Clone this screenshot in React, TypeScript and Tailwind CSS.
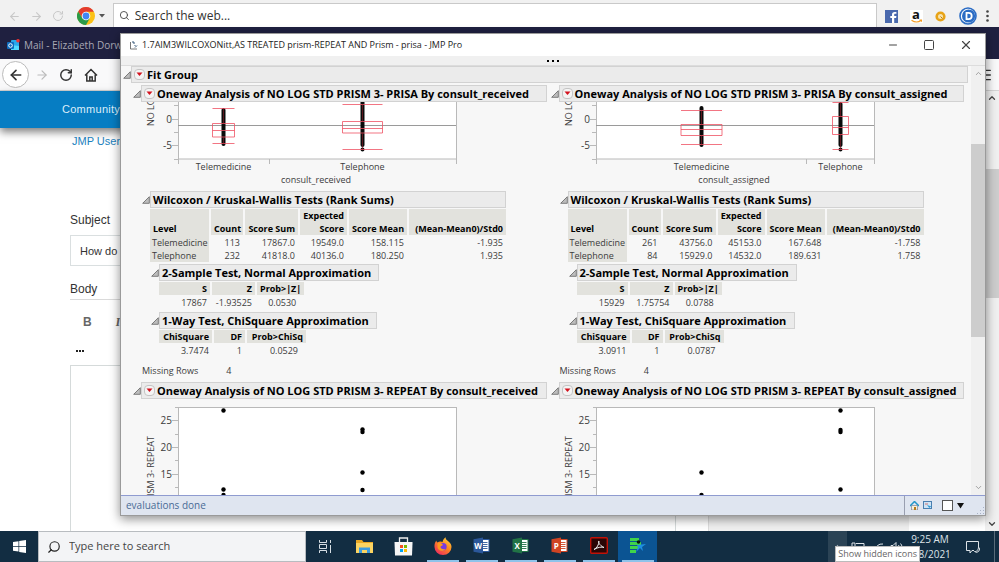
import { ArrowLeft, ArrowRight, ChevronDown, ChevronUp, Menu, Minus, RotateCw, Search, Square, X } from 'lucide-react'

type Box = { x: number; w: number; top: number; mid: number; bottom: number; hi: number; lo: number; from: number; to: number; dots: number[] }

type Group = {
  by: string
  split: number
  labelX: number
  boxes: Box[]
  levels: string[][]
  normal: string[]
  chi: string[]
  points: number[][]
}

const groups: Group[] = [
  {
    by: 'consult_received',
    split: 138.5,
    labelX: 185,
    boxes: [
      { x: 92.5, w: 22, top: 21.5, mid: 28.5, bottom: 35, hi: 6.5, lo: 41.5, from: 8, to: 42, dots: [] },
      { x: 231.5, w: 40, top: 19.5, mid: 26.5, bottom: 31, hi: 2.5, lo: 47.5, from: -4, to: 43, dots: [47.5] },
    ],
    levels: [
      ['Telemedicine', '113', '17867.0', '19549.0', '158.115', '-1.935'],
      ['Telephone', '232', '41818.0', '40136.0', '180.250', '1.935'],
    ],
    normal: ['17867', '-1.93525', '0.0530'],
    chi: ['3.7474', '1', '0.0529'],
    points: [[92.5, 10.5], [92.5, 89.5], [92.5, 95], [231.5, 29.5], [231.5, 32], [231.5, 72.5], [231.5, 90]],
  },
  {
    by: 'consult_assigned',
    split: 257.5,
    labelX: 185,
    boxes: [
      { x: 152.5, w: 41, top: 22.5, mid: 27.5, bottom: 33.5, hi: 8.5, lo: 42.5, from: 6, to: 43, dots: [] },
      { x: 291.5, w: 16, top: 14.5, mid: 25.5, bottom: 32.5, hi: 0.5, lo: 47.5, from: 2, to: 43, dots: [47.5] },
    ],
    levels: [
      ['Telemedicine', '261', '43756.0', '45153.0', '167.648', '-1.758'],
      ['Telephone', '84', '15929.0', '14532.0', '189.631', '1.758'],
    ],
    normal: ['15929', '1.75754', '0.0788'],
    chi: ['3.0911', '1', '0.0787'],
    points: [[152.5, 72.5], [152.5, 95], [291.5, 10.5], [291.5, 30], [291.5, 32], [291.5, 89.5]],
  },
]

function Disclosure() {
  return (
    <button aria-label="Toggle section" className="flex w-2 flex-none justify-end">
      <svg width="8" height="8" viewBox="0 0 8 8">
        <path d="M7.3 0.7v6.6H0.7z" fill="#bdbdbd" stroke="#6f6f6f" strokeWidth="0.9" />
      </svg>
    </button>
  )
}

function Heading({ title, menu, className = '' }: { title: string; menu?: boolean; className?: string }) {
  return (
    <div className="flex h-[17px] items-center">
      <Disclosure />
      <div className={`flex h-[17px] items-center gap-[2px] border border-[#d2d2d2] bg-[#ebebeb] pl-[2px] ${className}`}>
        {menu && (
          <button aria-label="Options" className="flex size-[11px] flex-none items-center justify-center rounded-sm border border-[#c4c4c4] bg-[#f4f4f4]">
            <svg width="7" height="5" viewBox="0 0 7 5">
              <path d="M0.5 0.5h6l-3 3.5z" fill="#d3121e" />
            </svg>
          </button>
        )}
        <h2 className="text-[11px] leading-[15px] font-bold whitespace-nowrap text-black">{title}</h2>
      </div>
    </div>
  )
}

/* lower part of the box plot, the rest is scrolled under the heading */
function BoxPlot({ g }: { g: Group }) {
  return (
    <svg width="418" height="88" viewBox="0 0 418 88" className="block flex-none text-[9px]" fill="#3c3c3c">
      <rect x="47.5" y="-10" width="278" height="67" fill="#fff" stroke="#b9b9b9" />
      <path d={`M43 3.5h4M41 17.5h6M43 30.5h4M41 43.5h6M43 57.5h4M47.5 57v5M${g.split} 57v5M325.5 57v5`} stroke="#b9b9b9" />
      <path d="M47 23.5h278" stroke="#9a9a9a" />
      {g.boxes.map(b => (
        <g key={b.x}>
          <path d={`M${b.x} ${b.from}V${b.to}`} stroke="#0a0a0a" strokeWidth="4" strokeLinecap="round" />
          {b.dots.map(d => (
            <circle key={d} cx={b.x} cy={d} r="2" fill="#0a0a0a" />
          ))}
          <path
            d={`M${b.x - b.w / 2} ${b.hi}h${b.w}M${b.x - b.w / 2} ${b.lo}h${b.w}M${b.x - b.w / 2} ${b.mid}h${b.w}M${b.x - b.w / 2} ${b.top}h${b.w}V${b.bottom}h${-b.w}z`}
            fill="none"
            stroke="#ef5364"
            strokeOpacity="0.8"
          />
          <path d={`M${b.x} ${b.hi}V${b.top}M${b.x} ${b.bottom}V${b.lo}`} stroke="#8f1c2a" strokeOpacity="0.6" />
        </g>
      ))}
      <text x="41" y="21" textAnchor="end" className="text-[10px]">0</text>
      <text x="41" y="47" textAnchor="end" className="text-[10px]">-5</text>
      <text transform="translate(23 24) rotate(-90)">NO LOG</text>
      <text x={g.boxes[0].x} y="68" textAnchor="middle">Telemedicine</text>
      <text x={g.boxes[1].x} y="68" textAnchor="middle">Telephone</text>
      <text x={g.labelX} y="81" textAnchor="middle">{g.by}</text>
    </svg>
  )
}

function DotPlot({ g }: { g: Group }) {
  return (
    <svg width="418" height="150" viewBox="0 0 418 150" className="mt-px block flex-none text-[10px]" fill="#3c3c3c">
      <rect x="47.5" y="7.5" width="278" height="150" fill="#fff" stroke="#b9b9b9" />
      <path d="M44 7.5h3M41 20.5h6M44 34.5h3M41 47.5h6M44 60.5h3M41 74.5h6M44 87.5h3" stroke="#b9b9b9" />
      {g.points.map(([x, y]) => (
        <circle key={`${x}-${y}`} cx={x} cy={y} r="2.2" fill="#000" />
      ))}
      <text x="41" y="24" textAnchor="end">25</text>
      <text x="41" y="51" textAnchor="end">20</text>
      <text x="41" y="78" textAnchor="end">15</text>
      <text transform="translate(23 36) rotate(-90)" textAnchor="end" className="text-[9px]">NO LOG STD PRISM 3- REPEAT</text>
    </svg>
  )
}

const th = 'border-r-2 border-[#f7f7f7] bg-[#e2e2dd] bg-clip-padding px-[3px] text-right align-bottom font-bold text-black last:border-r-0'
const td = 'border-r-2 border-transparent px-[3px] text-right last:border-r-0'

function RankSums({ rows }: { rows: string[][] }) {
  return (
    <table className="mt-px ml-2 w-[356px] table-fixed text-[9px] leading-[13px] text-[#3c3c3c]">
      <thead>
        <tr className="h-[26px]">
          <th className={`${th} w-[60px] text-left!`}>Level</th>
          <th className={`${th} w-[34px]`}>Count</th>
          <th className={`${th} w-[55px] whitespace-nowrap`}>Score Sum</th>
          <th className={`${th} w-[49px]`}>Expected Score</th>
          <th className={`${th} w-[60px] whitespace-nowrap`}>Score Mean</th>
          <th className={`${th} whitespace-nowrap`}>(Mean-Mean0)/Std0</th>
        </tr>
      </thead>
      <tbody>
        {rows.map(r => (
          <tr key={r[0]} className="first:*:pt-px">
            {r.map((c, i) => (
              <td key={i} className={i === 0 ? 'border-r-2 border-[#f7f7f7] bg-[#e2e2dd] bg-clip-padding pl-[2px]' : td}>
                {c}
              </td>
            ))}
          </tr>
        ))}
      </tbody>
    </table>
  )
}

function SmallTable({ head, row, widths }: { head: string[]; row: string[]; widths: string[] }) {
  return (
    <table className="mt-px ml-2 table-fixed text-[9px] leading-[13px] text-[#3c3c3c]">
      <thead>
        <tr>
          {head.map((h, i) => (
            <th key={h} className={`${th} ${widths[i]} whitespace-nowrap`}>{h}</th>
          ))}
        </tr>
      </thead>
      <tbody>
        <tr>
          {row.map((c, i) => (
            <td key={i} className={`${td} pt-px ${i === 2 ? 'pr-2!' : ''}`}>{c}</td>
          ))}
        </tr>
      </tbody>
    </table>
  )
}

function Analysis({ g }: { g: Group }) {
  return (
    <section className="flex flex-col">
      <div className="pr-[2px] pl-[2px]">
        <Heading menu title={`Oneway Analysis of NO LOG STD PRISM 3- PRISA By ${g.by}`} className="flex-1" />
      </div>
      <BoxPlot g={g} />
      <div className="mt-px pl-[11px]">
        <Heading title="Wilcoxon / Kruskal-Wallis Tests (Rank Sums)" className="w-[356px]" />
        <RankSums rows={g.levels} />
        <div className="mt-[2px] pl-[9px]">
          <Heading title="2-Sample Test, Normal Approximation" className="w-[220px]" />
          <SmallTable head={['S', 'Z', 'Prob>|Z|']} row={g.normal} widths={['w-[52px]', 'w-[45px]', 'w-[48px]']} />
          <div className="h-[3px]" />
          <Heading title="1-Way Test, ChiSquare Approximation" className="w-[218px]" />
          <SmallTable head={['ChiSquare', 'DF', 'Prob>ChiSq']} row={g.chi} widths={['w-[54px]', 'w-[33px]', 'w-[60px]']} />
        </div>
        <p className="mt-[6px] flex gap-7 text-[9px] leading-[15px] text-[#3c3c3c]">
          <span>Missing Rows</span>
          <span>4</span>
        </p>
      </div>
      <div className="mt-[4px] pr-[2px] pl-[2px]">
        <Heading menu title={`Oneway Analysis of NO LOG STD PRISM 3- REPEAT By ${g.by}`} className="flex-1" />
      </div>
      <DotPlot g={g} />
    </section>
  )
}

function ChromeLogo() {
  return (
    <svg width="18" height="18" viewBox="0 0 18 18">
      <circle cx="9" cy="9" r="9" fill="#fbc116" />
      <path d="M9 4.8h7.9A9 9 0 0 0 1.2 4.500l3.900 6.700z" fill="#e33b2e" />
      <path d="M1.200 4.500A9 9 0 0 0 9 18l3.800-6.800L9 13l-3.800-2z" fill="#2a9a48" />
      <circle cx="9" cy="9" r="4.300" fill="#fff" />
      <circle cx="9" cy="9" r="3.400" fill="#4285f4" />
    </svg>
  )
}

function LaunchBar() {
  return (
    <div className="flex h-[27px] flex-none items-end bg-[#f1f1f1]">
      <div className="flex h-[22px] w-[113px] items-center gap-[9px] pl-2 text-[#c8c8c8]">
        <ArrowLeft size={13} strokeWidth={2} />
        <ArrowRight size={13} strokeWidth={2} />
        <RotateCw size={12} strokeWidth={2} />
        <button aria-label="Browser" className="ml-1 flex items-center gap-1">
          <ChromeLogo />
          <svg width="6" height="4" viewBox="0 0 6 4">
            <path d="M0 0h6L3 3.5z" fill="#555" />
          </svg>
        </button>
      </div>
      <label className="flex h-6 flex-1 items-center gap-[5px] border border-b-0 border-[#c9c9c9] bg-white pl-[5px]">
        <Search size={11} className="text-[#444]" />
        <input aria-label="Search the web" placeholder="Search the web..." className="w-full font-['Open_Sans',sans-serif] text-[12px] outline-none placeholder:text-[#333]" />
      </label>
      <div className="flex h-[22px] w-[122px] items-center gap-3 pl-2">
        <svg width="13" height="13" viewBox="0 0 13 13">
          <rect width="13" height="13" fill="#4968ad" />
          <path d="M9.2 13V8h1.9l.3-2H9.2V4.8c0-.6.3-1 1-1h1.2V2H9.7C7.9 2 7 3 7 4.6V6H5.3v2H7v5z" fill="#fff" />
        </svg>
        <svg width="13" height="13" viewBox="0 0 13 13">
          <rect width="13" height="13" fill="#fff" />
          <text x="6" y="9" textAnchor="middle" fontSize="13" fontWeight="bold" fill="#111" className="font-['Open_Sans',sans-serif]">a</text>
          <path d="M1.500 10.300c3 2 7 2 9.500 0.200M9.500 10h2v1.800" fill="none" stroke="#f59b23" strokeWidth="1.100" />
        </svg>
        <svg width="11" height="11" viewBox="0 0 11 11">
          <circle cx="5.5" cy="5.5" r="3.8" fill="#f7e3ae" stroke="#e8a317" strokeWidth="2.6" />
          <path d="M5.5 5.5l2 2" stroke="#b97a12" />
        </svg>
        <svg width="18" height="18" viewBox="0 0 18 18" className="ml-px">
          <circle cx="9" cy="9" r="8" fill="#fff" stroke="#2b6cc4" strokeWidth="1.6" />
          <circle cx="9.6" cy="9" r="6.600" fill="#2b6cc4" />
          <path d="M7.5 5.800h2a3.200 3.200 0 0 1 0 6.400h-2z" fill="none" stroke="#fff" strokeWidth="1.8" />
        </svg>
        <svg width="3" height="12" viewBox="0 0 3 12" className="-ml-[3px]" fill="#444">
          <circle cx="1.5" cy="1.5" r="1.3" />
          <circle cx="1.5" cy="6" r="1.3" />
          <circle cx="1.5" cy="10.5" r="1.3" />
        </svg>
      </div>
    </div>
  )
}

function BrowserPage() {
  return (
    <div className="flex min-h-0 flex-1 flex-col bg-white">
      <div className="flex h-8 flex-none items-center gap-1 bg-[#1f2040] pt-1 pl-[7px] font-['Open_Sans',sans-serif] text-[10px] text-[#a9a9b5]">
        <svg width="13" height="12" viewBox="0 0 13 12">
          <rect x="4" y="1" width="8" height="10" rx="1" fill="#28a8ea" />
          <path d="M4 6l8 1v4H4z" fill="#50d9ff" />
          <rect y="3" width="7" height="7" rx="1" fill="#0f6cbd" />
          <circle cx="3.5" cy="6.5" r="1.8" fill="none" stroke="#fff" />
          <circle cx="11" cy="1.8" r="1.8" fill="#e33" />
        </svg>
        <span className="whitespace-nowrap">Mail - Elizabeth Dorwart</span>
      </div>
      <div className="flex h-8 flex-none items-center justify-between border-b border-[#d5d5d5] bg-[#f9f9fa]">
        <div className="flex items-center gap-[10px] pl-[2px] text-[#333]">
          <button aria-label="Back" className="flex size-[27px] items-center justify-center rounded-full border border-[#bbb] bg-white">
            <ArrowLeft size={16} strokeWidth={2.5} />
          </button>
          <ArrowRight size={14} className="-ml-1 text-[#bbb]" />
          <RotateCw size={14} strokeWidth={2.5} />
          <svg width="14" height="14" viewBox="0 0 14 14" className="ml-px" fill="none" stroke="#333" strokeWidth="1.5">
            <path d="M1 7.5L7 1.5l6 6M2.8 6.5V13h8.4V6.5M5.8 13V9h2.4v4" />
          </svg>
        </div>
        <Menu size={16} className="mr-[6px] text-[#333]" />
      </div>
      <div className="flex min-h-0 flex-1">
        <div className="flex min-w-0 flex-1 flex-col font-['Liberation_Sans',Arial,sans-serif]">
          <div className="flex h-[37px] flex-none items-center bg-[#067dc3] pl-[62px] text-[11px] tracking-wide text-[#dceefa] shadow-[0_4px_8px_rgba(0,0,0,0.5)]">
            Community
          </div>
          <div className="flex min-h-0 flex-1">
            <form className="flex w-[676px] flex-none flex-col pl-[70px] text-[#333]">
              <a href="#user" className="mt-[6px] ml-[2px] text-[11px] leading-[15px] text-[#1a80bd]">JMP User</a>
              <label htmlFor="subject" className="mt-[63px] text-[12px] leading-4">Subject</label>
              <input id="subject" defaultValue="How do" className="mt-[7px] h-[31px] border border-[#dadfe0] px-[9px] text-[11px] outline-none" />
              <label htmlFor="body" className="mt-[15px] border-b border-[#dadada] pb-[2px] text-[12px] leading-4">Body</label>
              <div className="mt-[14px] flex gap-6 pl-[13px] text-[12px] leading-4 text-[#666]">
                <button type="button" className="font-bold">B</button>
                <button type="button" className="font-serif font-bold italic">I</button>
              </div>
              <button type="button" aria-label="More" className="mt-[20px] flex h-[3px] gap-px pl-[6px]">
                <i className="size-[2px] bg-[#222]" />
                <i className="size-[2px] bg-[#222]" />
                <i className="size-[2px] bg-[#222]" />
              </button>
              <textarea id="body" className="mt-[12px] min-h-0 flex-1 resize-none border border-b-0 border-[#d5dada] outline-none" />
            </form>
            <aside className="ml-8 w-[201px] border-l border-[#ddd] bg-[#f0f0f0]" />
          </div>
        </div>
        <div className="flex w-[14px] flex-none flex-col items-center bg-[#f0f0f0] text-[#444]">
          <ChevronUp size={10} strokeWidth={3} className="mt-[2px]" />
          <div className="mt-[66px] h-[129px] w-full bg-[#cdcdcd]" />
          <ChevronDown size={10} strokeWidth={3} className="mt-auto mb-[2px]" />
        </div>
      </div>
    </div>
  )
}

function ReportWindow() {
  return (
    <div className="absolute top-[33px] right-[13px] bottom-[46px] left-[120px] flex flex-col border border-[#9a9a9a] bg-[#f7f7f7] font-['Open_Sans','Noto_Sans',sans-serif] shadow-[0_3px_10px_rgba(0,0,0,0.45)]">
      <header className="flex h-[22px] flex-none items-center bg-white pl-2 text-[#222]">
        <svg width="9" height="9" viewBox="0 0 9 9" fill="none" stroke="#555">
          <path d="M1.5 1v7H8" strokeWidth="0.8" />
          <path d="M3 1h2v2M6 6.5L8 4.5M5.5 4l1 1" stroke="#357" />
        </svg>
        <h1 className="ml-1 flex-1 truncate text-[9px]">1.7AIM3WILCOXONitt,AS TREATED prism-REPEAT AND Prism - prisa - JMP Pro</h1>
        <div className="flex items-center gap-6 pr-3 text-[#444]">
          <button aria-label="Minimize"><Minus size={12} strokeWidth={2} /></button>
          <button aria-label="Maximize"><Square size={12} strokeWidth={2} /></button>
          <button aria-label="Close"><X size={14} strokeWidth={2} /></button>
        </div>
      </header>
      <div className="flex h-[10px] flex-none items-center justify-center gap-[3px] border-b border-[#dcdcdc] bg-[#f0f0f0]">
        <i className="size-[2px] bg-black" />
        <i className="size-[2px] bg-black" />
        <i className="size-[2px] bg-black" />
      </div>
      <div className="flex min-h-0 flex-1">
        <div className="min-w-0 flex-1 overflow-hidden pr-[3px] pl-[2px]">
          <Heading menu title="Fit Group" className="flex-1" />
          <div className="mt-[2px] mr-[2px] grid grid-cols-2 pl-2">
            {groups.map(g => (
              <Analysis key={g.by} g={g} />
            ))}
          </div>
        </div>
        <div className="flex w-[14px] flex-none flex-col items-center bg-[#f0f0f0] text-[#888]">
          <ChevronUp size={9} className="mt-[3px]" />
          <div className="mt-[66px] h-[193px] w-full bg-[#cdcdcd]" />
          <ChevronDown size={9} className="mt-auto mb-[3px]" />
        </div>
      </div>
      <footer className="flex h-5 flex-none items-center border-t border-[#8f9bd0] bg-[#dfe5f0] pl-[5px] text-[10px] text-[#4a6b96]">
        <span className="flex-1">evaluations done</span>
        <div className="flex h-full items-center gap-1 border-l border-[#999fb0] pl-[5px]">
          <svg width="9" height="9" viewBox="0 0 9 9">
            <path d="M1.5 4.5h6V9h-6z" fill="#f3f0d8" stroke="#557" strokeWidth="0.5" />
            <path d="M0 5l4.5-4.5L9 5" fill="none" stroke="#2196c9" strokeWidth="1.5" />
            <path d="M4 6h2v3H4z" fill="#b77a1a" />
          </svg>
          <svg width="9" height="9" viewBox="0 0 9 9">
            <rect x="0.5" y="0.5" width="8" height="7" fill="#cde3f5" stroke="#4a7fb0" />
            <path d="M2 3h3" stroke="#c77" />
            <path d="M4 4l4.500 1.500-2 1 1 2" fill="#2c9bd6" />
          </svg>
          <input type="checkbox" aria-label="Select window" className="ml-[6px] size-[11px] appearance-none border border-[#555] bg-white" />
          <svg width="7" height="6" viewBox="0 0 7 6">
            <path d="M0 0h7L3.5 5.5z" fill="#111" />
          </svg>
          <svg width="9" height="9" viewBox="0 0 9 9" className="ml-2 self-end" fill="#a9b2c6">
            <path d="M7 1h1v1H7zM7 4h1v1H7zM7 7h1v1H7zM4 4h1v1H4zM4 7h1v1H4zM1 7h1v1H1z" />
          </svg>
        </div>
      </footer>
    </div>
  )
}

function Office({ letter, color }: { letter: string; color: string }) {
  return (
    <svg width="17" height="17" viewBox="0 0 17 17">
      <rect x="8" y="2.5" width="8" height="12" fill="#fff" stroke={color} />
      <path d="M10 5.5h4.500M10 7.500h4.500M10 9.500h4.500M10 11.500h4.500" stroke={color} strokeWidth="0.9" />
      <path d="M0.5 2.3L10 0.500v16l-9.500-1.800z" fill={color} />
      <text x="5.2" y="11.5" textAnchor="middle" fontSize="8" fontWeight="bold" fill="#fff">{letter}</text>
    </svg>
  )
}

const apps = [
  {
    name: 'File Explorer',
    open: false,
    icon: (
      <svg width="17" height="15" viewBox="0 0 17 15">
        <path d="M0 1h6l1.5 2H17v11H0z" fill="#e9a825" />
        <path d="M0 4h17v10H0z" fill="#fcd462" />
        <path d="M3 14V8.500h11V14h-3v-3H6v3z" fill="#3c9be0" />
      </svg>
    ),
  },
  {
    name: 'Store',
    open: false,
    icon: (
      <svg width="19" height="19" viewBox="0 0 19 19">
        <path d="M5.5 5V1h8v4" fill="none" stroke="#eee" strokeWidth="1.3" />
        <path d="M0.5 5h18v1.500L18 18.500H1z" fill="#f6f6f6" />
        <path d="M6 8h3v3H6z" fill="#f25022" />
        <path d="M10 8h3v3h-3z" fill="#7fba00" />
        <path d="M6 12h3v3H6z" fill="#00a4ef" />
        <path d="M10 12h3v3h-3z" fill="#ffb900" />
      </svg>
    ),
  },
  {
    name: 'Firefox',
    open: true,
    icon: (
      <svg width="18" height="18" viewBox="0 0 18 18">
        <defs>
          <linearGradient id="fox" x1="1" y1="0" x2="0.3" y2="1">
            <stop offset="0" stopColor="#ffe14a" />
            <stop offset="0.5" stopColor="#ff8a1e" />
            <stop offset="1" stopColor="#f0305c" />
          </linearGradient>
        </defs>
        <path d="M1 6c.5-1.500 1-2 1.500-2.500 0 1 .3 1.500.8 2C6 4 7.500 4.500 8.500 5 9 3 10 1.500 11.500.3c0 2 1.500 3 3 4.200 2 1.500 3 3.500 3 5.500a8.500 8 0 0 1-17 0C.4 8.500.6 7 1 6z" fill="url(#fox)" />
        <circle cx="9" cy="9.7" r="3.7" fill="#7a3be0" />
        <path d="M3.5 6.500c2-1 4-.5 5.500 1.500L6.500 9.500c-.5 2 2.500 3.500 5 2.500-2 3-8 2-8-2z" fill="#ff9a1f" />
      </svg>
    ),
  },
  { name: 'Word', open: true, icon: <Office letter="W" color="#2b579a" /> },
  { name: 'Excel', open: true, icon: <Office letter="X" color="#217346" /> },
  { name: 'PowerPoint', open: true, icon: <Office letter="P" color="#d04423" /> },
  {
    name: 'Acrobat',
    open: true,
    icon: (
      <svg width="18" height="17" viewBox="0 0 18 17">
        <rect x="0.7" y="0.7" width="16.6" height="15.6" rx="1" fill="#2a0606" stroke="#c11208" strokeWidth="1.4" />
        <path d="M4 12.500c3-1.500 5-5 5-8.500-1 0-.5 4 5 6.500-2-.8-6-.5-10 2z" fill="none" stroke="#eee" />
      </svg>
    ),
  },
  {
    name: 'JMP',
    open: true,
    icon: (
      <svg width="18" height="17" viewBox="0 0 18 17">
        <path d="M1 1h9v3H1zM1 5h11v3H1zM1 9h9v3H1zM1 13h6v3H1z" fill="#3fd44a" />
        <circle cx="9.5" cy="5" r="1.8" fill="#07180a" />
        <path d="M8 8l9-1-4 3 1 4-3-3-4 4 2-5z" fill="#1e8fe0" />
      </svg>
    ),
  },
]

function Taskbar() {
  return (
    <footer className="relative flex h-[31px] flex-none bg-[#122d42] font-['Open_Sans',sans-serif]">
      <button aria-label="Start" className="flex w-[38px] items-center justify-center">
        <svg width="13" height="13" viewBox="0 0 13 13" fill="#fff">
          <path d="M0 2l5.5-.8V6H0zM6.2 1.1L13 0v6H6.2zM0 6.7h5.5v4.8L0 10.8zM6.2 6.7H13V13l-6.8-1z" />
        </svg>
      </button>
      <label className="flex w-[268px] items-center gap-2 border border-[#b8bcc0] bg-[#f3f4f6] pl-2">
        <Search size={14} strokeWidth={2} className="-scale-x-100 flex-none text-[#222]" />
        <input aria-label="Type here to search" placeholder="Type here to search" className="w-full text-[11px] outline-none placeholder:text-[#444]" />
      </label>
      <button aria-label="Task View" className="flex w-[39px] items-center justify-center">
        <svg width="15" height="13" viewBox="0 0 15 13" fill="none" stroke="#d5dde3">
          <path d="M1.5 0v2.5h7V0M1.500 13v-2.500h7V13M1.500 4.500h7v4h-7zM12.500 0v3M12.500 5v8" />
        </svg>
      </button>
      <nav className="flex flex-1">
        {apps.map(a => (
          <button
            key={a.name}
            aria-label={a.name}
            className={`flex w-[39px] flex-col items-center justify-between ${a.name === 'JMP' ? 'bg-[#0b5493]' : ''}`}
          >
            <span className="flex flex-1 items-center">{a.icon}</span>
            {a.open && <span className="h-[2px] w-8 bg-[#8fc3ea]" />}
          </button>
        ))}
      </nav>
      <div className="flex items-center text-[#dde3e8]">
        <button aria-label="Show hidden icons" className="flex h-full w-[19px] items-center justify-center bg-[#2b4355]">
          <ChevronUp size={9} />
        </button>
        <svg width="56" height="12" viewBox="0 0 56 12" className="ml-1" fill="none" stroke="#dde3e8">
          <path d="M1 2v4h3V2zM5 2.5h8v6H3M24 10a7 7 0 0 1 8-7M27 10a5 5 0 0 1 5-4M40 4.500h2l3-3v9l-3-3h-2zM47.500 4a3 3 0 0 1 0 4M49.500 2.500a5 5 0 0 1 0 7" />
        </svg>
        <time className="w-[46px] text-center text-[10px] leading-[15px] whitespace-nowrap">
          9:25 AM
          <br />
          3/8/2021
        </time>
        <button aria-label="Notifications" className="ml-[7px] flex w-[26px] justify-center">
          <svg width="14" height="14" viewBox="0 0 14 14" fill="none" stroke="#dde3e8">
            <path d="M8 10.5H6L4 13v-2.500H0.500v-9h12V7" />
            <path d="M12.5 7a3 3 0 1 1-4 4.500c2 .5 4-1.500 4-4.500z" />
          </svg>
        </button>
        <span className="ml-2 h-full w-[5px] border-l border-[#5a6c7a]" />
      </div>
      <div role="tooltip" className="absolute right-[79px] bottom-0 border border-[#bbb] bg-white px-[2px] text-[9px] leading-[14px] whitespace-nowrap text-[#666]">
        Show hidden icons
      </div>
    </footer>
  )
}

export default function App() {
  return (
    <div className="relative flex h-screen flex-col overflow-hidden">
      <LaunchBar />
      <BrowserPage />
      <ReportWindow />
      <Taskbar />
    </div>
  )
}
